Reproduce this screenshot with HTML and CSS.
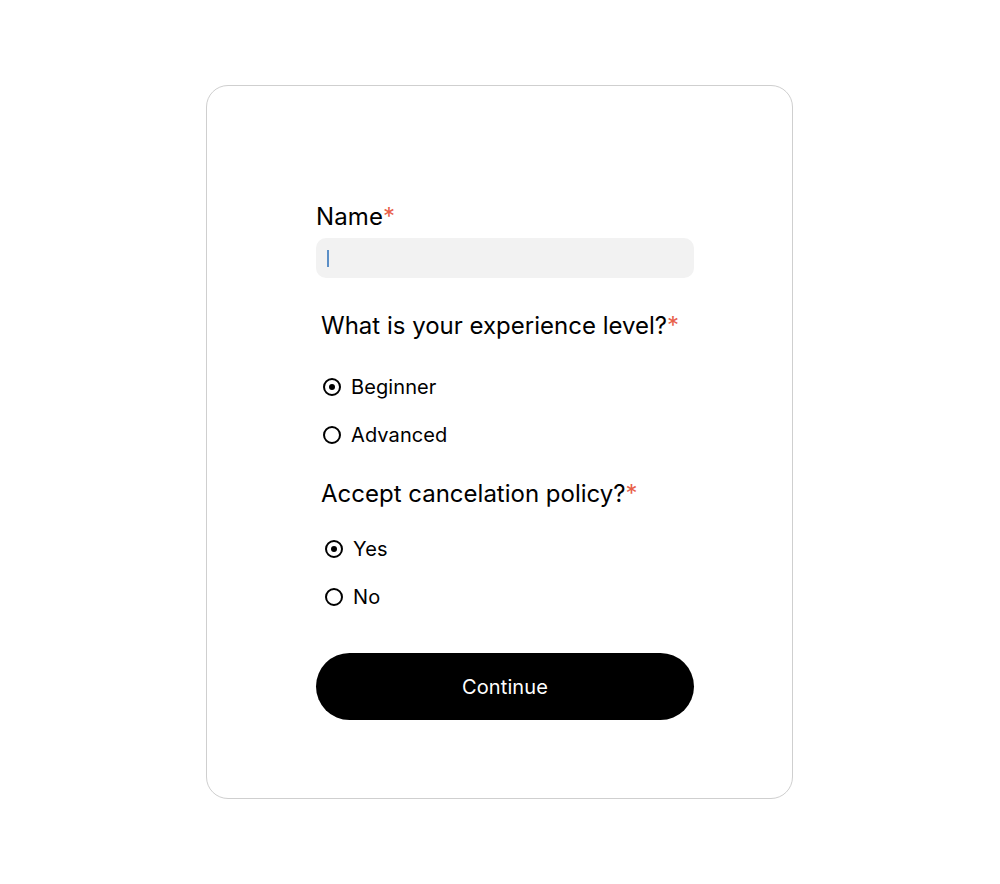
FILE: index.html
```html
<!DOCTYPE html>
<html lang="en">
<head>
<meta charset="utf-8">
<title>Form</title>
<link rel="stylesheet" href="styles.css">
</head>
<body>
<main class="page">
  <section class="card">
    <form class="form">
      <div class="field">
        <label class="label" for="name">Name<span class="req">*</span></label>
        <div class="input"><span class="caret"></span></div>
      </div>
      <fieldset class="group group-1">
        <legend class="question">What is your experience level?<span class="req">*</span></legend>
        <div class="option"><span class="radio checked"></span><span class="opt-text">Beginner</span></div>
        <div class="option"><span class="radio"></span><span class="opt-text">Advanced</span></div>
      </fieldset>
      <fieldset class="group group-2">
        <legend class="question">Accept cancelation policy?<span class="req">*</span></legend>
        <div class="option"><span class="radio checked"></span><span class="opt-text">Yes</span></div>
        <div class="option"><span class="radio"></span><span class="opt-text">No</span></div>
      </fieldset>
      <button type="button" class="btn">Continue</button>
    </form>
  </section>
</main>
</body>
</html>
```

FILE: styles.css
```css
* { box-sizing: border-box; }
html, body { margin: 0; padding: 0; background: #fff; }
body { font-family: Inter, "Noto Sans", Arial, sans-serif; color: #000; }

.page {
  width: 1000px;
  height: 884px;
  display: flex;
  align-items: center;
  justify-content: center;
  padding-right: 1px;
}

.card {
  width: 587px;
  height: 714px;
  border: 1px solid #cfcfcf;
  border-radius: 22px;
  padding: 116px 98px 0 109px;
}

.form { display: flex; flex-direction: column; }

.label {
  display: block;
  font-size: 24px;
  line-height: 30px;
  letter-spacing: 0.1px;
  margin-bottom: 6px;
}

.req { color: #e8604a; }

.input {
  height: 40px;
  background: #f2f2f2;
  border-radius: 10px;
  padding: 12px 11px;
}

.caret {
  display: block;
  width: 2px;
  height: 17px;
  background: #5b8fc7;
}

.group {
  border: 0;
  margin: 0;
  padding: 0;
  padding-left: 5px;
  min-width: 0;
}

.group-1 { margin-top: 33px; }
.group-2 { margin-top: 20px; }

.question {
  padding: 0;
  font-size: 24px;
  line-height: 30px;
}

.group-1 .question { margin-bottom: 22px; }
.group-2 .question { margin-bottom: 16px; }

.option {
  display: flex;
  align-items: center;
  gap: 10px;
  height: 48px;
  font-size: 20px;
  letter-spacing: 0.1px;
}

.group-1 .option { padding-left: 2px; }
.group-2 .option { padding-left: 4px; }

.radio {
  width: 18px;
  height: 18px;
  border: 2px solid #000;
  border-radius: 50%;
  display: flex;
  align-items: center;
  justify-content: center;
  flex: none;
}

.radio.checked::after {
  content: "";
  width: 6px;
  height: 6px;
  border-radius: 50%;
  background: #000;
}

.btn {
  margin-top: 32px;
  height: 67px;
  border: 0;
  border-radius: 34px;
  background: #000;
  color: #fff;
  font-family: Inter, "Noto Sans", Arial, sans-serif;
  font-size: 20px;
  letter-spacing: 0.1px;
  cursor: pointer;
}
```
